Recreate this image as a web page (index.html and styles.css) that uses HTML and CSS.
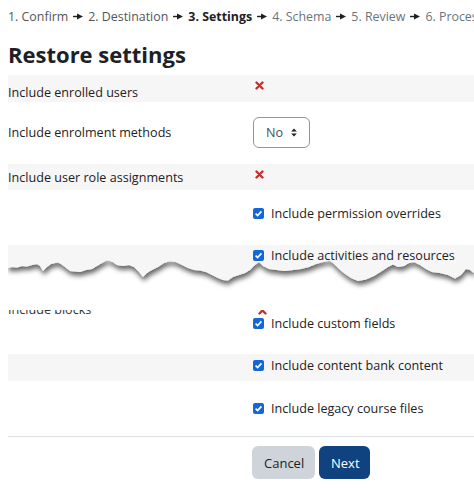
FILE: index.html
```html
<!DOCTYPE html>
<html>
  <head>
    <title>Restore settings</title>
    <link rel="stylesheet" href="styles.css">
  </head>
  <body>
    <div class="page">
      <div class="steps">
        <span class="step done">1. Confirm</span>
        <svg class="sep" width="10" height="7" viewBox="0 0 10 7"><path d="M0 3.5h5" stroke="#1d2125" stroke-width="1.4"/><path d="M4 0.5 10 3.5 4 6.5z" fill="#1d2125"/></svg>
        <span class="step done">2. Destination</span>
        <svg class="sep" width="10" height="7" viewBox="0 0 10 7"><path d="M0 3.5h5" stroke="#1d2125" stroke-width="1.4"/><path d="M4 0.5 10 3.5 4 6.5z" fill="#1d2125"/></svg>
        <span class="step current">3. Settings</span>
        <svg class="sep" width="10" height="7" viewBox="0 0 10 7"><path d="M0 3.5h5" stroke="#1d2125" stroke-width="1.4"/><path d="M4 0.5 10 3.5 4 6.5z" fill="#1d2125"/></svg>
        <span class="step">4. Schema</span>
        <svg class="sep" width="10" height="7" viewBox="0 0 10 7"><path d="M0 3.5h5" stroke="#1d2125" stroke-width="1.4"/><path d="M4 0.5 10 3.5 4 6.5z" fill="#1d2125"/></svg>
        <span class="step">5. Review</span>
        <svg class="sep" width="10" height="7" viewBox="0 0 10 7"><path d="M0 3.5h5" stroke="#1d2125" stroke-width="1.4"/><path d="M4 0.5 10 3.5 4 6.5z" fill="#1d2125"/></svg>
        <span class="step">6. Process</span>
      </div>

      <h2>Restore settings</h2>

      <!-- top part of the form -->
      <div class="fitem alt row-enrolled">
        <div class="fitem-label">Include enrolled users</div>
        <div class="fitem-element">
          <svg class="cross" width="9" height="9" viewBox="0 0 9 9"><path d="M1.5 1.5l6 6M7.5 1.5l-6 6" stroke="#c7302a" stroke-width="2.4" stroke-linecap="round"/></svg>
        </div>
      </div>

      <div class="fitem row-methods">
        <div class="fitem-label">Include enrolment methods</div>
        <div class="fitem-element">
          <div class="select">
            <span>No</span>
            <svg width="6" height="9" viewBox="0 0 6 9"><path d="M3 0.5 5.8 3.6H0.2z M3 8.5 5.8 5.4H0.2z" fill="#1d2125"/></svg>
          </div>
        </div>
      </div>

      <div class="fitem alt row-roles">
        <div class="fitem-label">Include user role assignments</div>
        <div class="fitem-element">
          <svg class="cross" width="9" height="9" viewBox="0 0 9 9"><path d="M1.5 1.5l6 6M7.5 1.5l-6 6" stroke="#c7302a" stroke-width="2.4" stroke-linecap="round"/></svg>
        </div>
      </div>

      <div class="fitem row-overrides">
        <div class="fitem-label"></div>
        <label class="check-item">
          <span class="check"><svg width="9" height="9" viewBox="0 0 9 9"><path d="M1.6 4.7 3.6 6.6 7.4 2.4" fill="none" stroke="#fff" stroke-width="1.7"/></svg></span>
          Include permission overrides
        </label>
      </div>

      <div class="fitem alt row-activities">
        <div class="fitem-label"></div>
        <label class="check-item">
          <span class="check"><svg width="9" height="9" viewBox="0 0 9 9"><path d="M1.6 4.7 3.6 6.6 7.4 2.4" fill="none" stroke="#fff" stroke-width="1.7"/></svg></span>
          Include activities and resources
        </label>
      </div>

      <svg class="tear" width="466" height="40" viewBox="8 260 466 40">
        <defs>
          <filter id="tear-shadow" x="-5%" y="-20%" width="110%" height="180%">
            <feDropShadow dx="1" dy="4" stdDeviation="2.4" flood-color="#000" flood-opacity="0.6"/>
          </filter>
        </defs>
        <path filter="url(#tear-shadow)" fill="#f6f6f6" d="M8 258 L8 269 L12 268 L17 268.5 L22 267 L27 267.5 L32 266 L37 265 L40 267 L43 272 L47 268 L51 265 L55 264 L58 263.5 L61 265 L65 268 L70 272 L75 272.5 L80 273 L86 271 L92 270 L97 267 L102 264 L107 261 L112 262.5 L117 266 L123 267 L129 266 L134 268 L139 273 L143 278 L147 274 L152 271 L158 268 L164 264 L170 262 L176 263 L182 266 L188 269 L194 271 L200 271.5 L206 273 L212 276 L218 279 L223 281 L228 281.5 L233 278 L239 276 L245 274 L250 271 L255 266 L259 263 L263 267 L269 270 L277 271 L285 272 L293 271 L301 270 L309 268 L316 265 L323 263 L330 261.5 L334 265 L339 270 L345 275 L351 279 L358 282 L366 280.5 L374 277 L382 272 L388 268 L393 265.5 L398 268 L404 267 L409 264 L414 263 L420 266 L426 270 L432 273 L440 274 L448 276 L455 279.5 L461 276 L466 270 L470 271 L474 274 L474 258 Z"/>
      </svg>

      <!-- lower part of the form -->
      <div class="torn-strip">
        <div class="torn-inner">
          <div class="fitem-label">Include blocks</div>
          <svg class="cross" width="9" height="9" viewBox="0 0 9 9"><path d="M1.5 1.5l6 6M7.5 1.5l-6 6" stroke="#c7302a" stroke-width="2.4" stroke-linecap="round"/></svg>
        </div>
      </div>

      <div class="fitem row-fields">
        <div class="fitem-label"></div>
        <label class="check-item">
          <span class="check"><svg width="9" height="9" viewBox="0 0 9 9"><path d="M1.6 4.7 3.6 6.6 7.4 2.4" fill="none" stroke="#fff" stroke-width="1.7"/></svg></span>
          Include custom fields
        </label>
      </div>

      <div class="fitem alt row-bank">
        <div class="fitem-label"></div>
        <label class="check-item">
          <span class="check"><svg width="9" height="9" viewBox="0 0 9 9"><path d="M1.6 4.7 3.6 6.6 7.4 2.4" fill="none" stroke="#fff" stroke-width="1.7"/></svg></span>
          Include content bank content
        </label>
      </div>

      <div class="fitem row-legacy">
        <div class="fitem-label"></div>
        <label class="check-item">
          <span class="check"><svg width="9" height="9" viewBox="0 0 9 9"><path d="M1.6 4.7 3.6 6.6 7.4 2.4" fill="none" stroke="#fff" stroke-width="1.7"/></svg></span>
          Include legacy course files
        </label>
      </div>

      <div class="buttons">
        <button type="button" class="btn btn-secondary">Cancel</button>
        <button type="button" class="btn btn-primary">Next</button>
      </div>
    </div>
  </body>
</html>
```

FILE: styles.css
```css
* {
  box-sizing: border-box;
  margin: 0;
  padding: 0;
}

body {
  background: #fff;
  color: #1d2125;
  font-family: "Open Sans", Arial, sans-serif;
  font-size: 12.6px;
  line-height: 18px;
  overflow: hidden;
}

.page {
  padding-left: 8px;
}

/* step indicator */
.steps {
  height: 33px;
  display: flex;
  align-items: center;
  gap: 5px;
  font-size: 12.4px;
  white-space: nowrap;
  overflow: hidden;
}

.step {
  color: #6a737b;
}

.step.done {
  color: #555;
}

.step.current {
  color: #1d2125;
  font-weight: bold;
}

.sep {
  flex-shrink: 0;
}

h2 {
  font-size: 22px;
  line-height: 28px;
  font-weight: bold;
  margin: 7px 0 7px;
}

/* form rows */
.fitem {
  display: flex;
  align-items: flex-start;
}

.fitem.alt {
  background-color: #f6f6f6;
}

.fitem-label {
  width: 245px;
  flex-shrink: 0;
}

.cross {
  display: block;
  margin-left: 2px;
}

.row-enrolled {
  height: 27px;
}

.row-enrolled .fitem-label {
  margin-top: 9px;
}

.row-enrolled .cross {
  margin-top: 6px;
}

.row-methods {
  height: 62px;
}

.row-methods .fitem-label {
  margin-top: 22px;
}

.row-methods .fitem-element {
  margin-top: 15px;
}

.select {
  width: 57px;
  height: 31px;
  border: 1px solid #8f959e;
  border-radius: 6px;
  display: flex;
  align-items: center;
  justify-content: space-between;
  padding: 0 12px 0 12px;
  color: #495057;
  background: #fff;
}

.row-roles {
  height: 26px;
}

.row-roles .fitem-label {
  margin-top: 5px;
}

.row-roles .cross {
  margin-top: 6px;
}

.check-item {
  display: flex;
  align-items: flex-start;
  gap: 7px;
  white-space: nowrap;
}

.check {
  width: 11px;
  height: 11px;
  margin-top: 3px;
  border-radius: 2px;
  background: #1567d6;
  display: flex;
  align-items: center;
  justify-content: center;
  flex-shrink: 0;
}

.check svg {
  display: block;
}

.row-overrides {
  height: 55px;
  padding-top: 15px;
}

.row-activities {
  height: 14px;
  padding-top: 2px;
  position: relative;
  z-index: 1;
}

.tear {
  display: block;
}

/* piece of the row that was cut off by the tear */
.torn-strip {
  margin-top: 11px;
  height: 5px;
  overflow: hidden;
}

.torn-inner {
  display: flex;
  margin-top: -9px;
  color: #333;
}

.torn-inner .cross {
  margin-top: 5px;
  margin-left: 5px;
}

.row-fields {
  height: 39px;
}

.row-bank {
  height: 27px;
  padding-top: 3px;
}

.row-legacy {
  height: 56px;
  padding-top: 19px;
  border-bottom: 1px solid #dee2e6;
}

.buttons {
  display: flex;
  gap: 4px;
  padding: 9px 0 0 244px;
}

.btn {
  height: 33px;
  border: none;
  border-radius: 6px;
  font-family: "Open Sans", Arial, sans-serif;
  font-size: 13px;
  padding: 0 12px;
}

.btn-secondary {
  width: 63px;
  background-color: #ced4da;
  color: #1d2125;
}

.btn-primary {
  width: 51px;
  background-color: #0f427f;
  color: #fff;
}
```
